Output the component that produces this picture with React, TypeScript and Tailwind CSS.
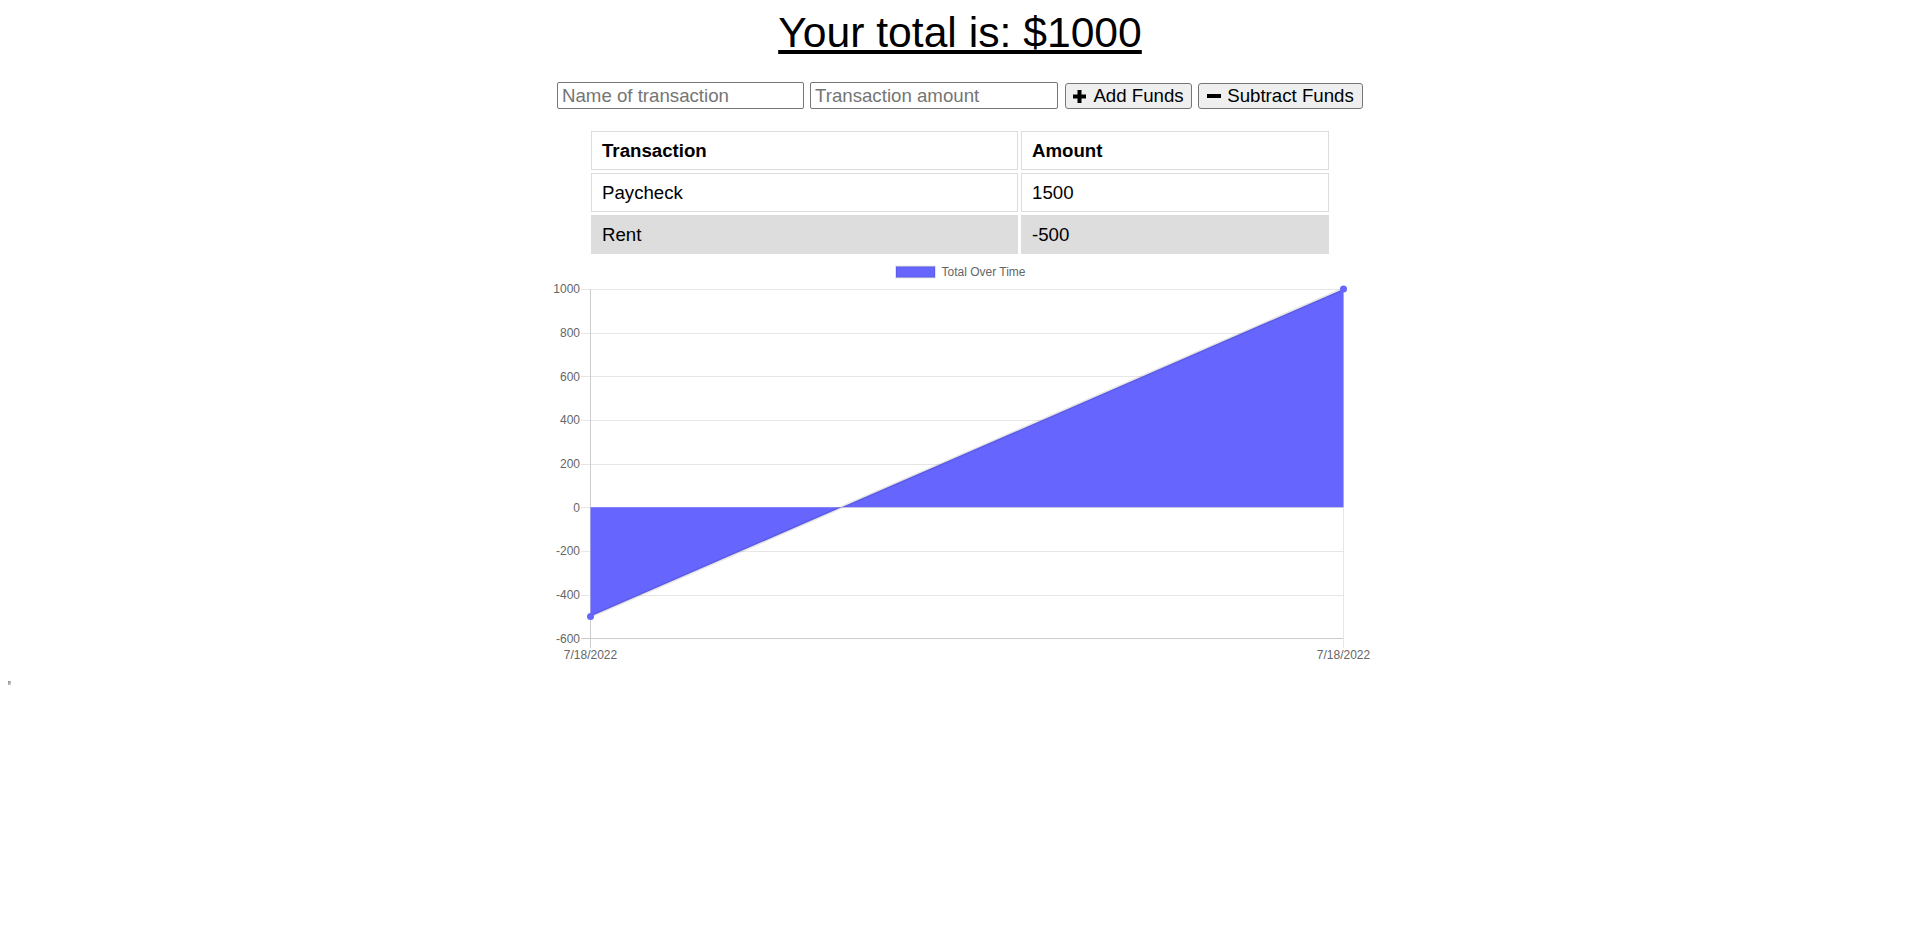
import React from "react";

const ticks = [1000, 800, 600, 400, 200, 0, -200, -400, -600];
const TOP = 31;
const SPAN = 349.3;
const yOf = (v: number) => TOP + ((1000 - v) * SPAN) / 1600;
const X0 = 50.5;
const X1 = 803.5;

function Chart() {
  const yZero = yOf(0);
  const yA = yOf(-500);
  const yB = yOf(1000);
  const xCross = X0 + ((X1 - X0) * 500) / 1500;
  return (
    <svg width={840} height={420} viewBox="0 0 840 420" className="mt-[4px] block">
      {/* legend */}
      <rect x={356} y={8.5} width={39} height={11} fill="#6666ff" stroke="rgba(0,0,0,0.1)" strokeWidth={2} />
      <text x={401.5} y={18.3} fontSize={12} fill="#666" fontFamily="'Liberation Sans', Arial, sans-serif">
        Total Over Time
      </text>

      {/* horizontal grid lines */}
      {ticks.map((t) => {
        const yy = Math.round(yOf(t)) + 0.5;
        const isBottom = t === -600;
        return (
          <g key={t}>
            <line
              x1={41}
              x2={X1}
              y1={yy}
              y2={yy}
              stroke={isBottom ? "#cccccc" : "#e6e6e6"}
              strokeWidth={1}
              shapeRendering="crispEdges"
            />
            <text
              x={40}
              y={yOf(t) + 4.2}
              fontSize={12}
              fill="#666"
              textAnchor="end"
              fontFamily="'Liberation Sans', Arial, sans-serif"
            >
              {t}
            </text>
          </g>
        );
      })}

      {/* vertical lines */}
      <line x1={X0} x2={X0} y1={TOP} y2={390} stroke="#cccccc" strokeWidth={1} shapeRendering="crispEdges" />
      <line x1={X1} x2={X1} y1={TOP} y2={390} stroke="#e6e6e6" strokeWidth={1} shapeRendering="crispEdges" />

      {/* fill */}
      <polygon points={`${X0},${yZero} ${X0},${yA} ${xCross},${yZero}`} fill="#6666ff" />
      <polygon points={`${xCross},${yZero} ${X1},${yB} ${X1},${yZero}`} fill="#6666ff" />
      <line x1={X0} y1={yA} x2={X1} y2={yB} stroke="rgba(0,0,0,0.1)" strokeWidth={3} />
      <circle cx={X0} cy={yA} r={3.5} fill="#6666ff" />
      <circle cx={X1} cy={yB} r={3.5} fill="#6666ff" />

      {/* x labels */}
      <text x={X0} y={401.3} fontSize={12} fill="#666" textAnchor="middle" fontFamily="'Liberation Sans', Arial, sans-serif">
        7/18/2022
      </text>
      <text x={X1} y={401.3} fontSize={12} fill="#666" textAnchor="middle" fontFamily="'Liberation Sans', Arial, sans-serif">
        7/18/2022
      </text>
    </svg>
  );
}

function PlusIcon() {
  return (
    <svg width={13} height={13} viewBox="0 0 13 13" className="mr-[7px] shrink-0">
      <rect x={4.5} y={0} width={4} height={13} fill="#000" />
      <rect x={0} y={4.5} width={13} height={4} fill="#000" />
    </svg>
  );
}

function MinusIcon() {
  return (
    <svg width={14} height={4} viewBox="0 0 14 4" className="mr-[6px] shrink-0">
      <rect x={0} y={0} width={14} height={4} fill="#000" />
    </svg>
  );
}

export default function App() {
  const rows = [
    { name: "Paycheck", amount: "1500", gray: false },
    { name: "Rent", amount: "-500", gray: true },
  ];
  return (
    <div className="min-h-screen bg-white font-['Liberation_Sans',Arial,sans-serif] text-black">
      <div className="flex flex-col items-center">
        <h1 className="mt-[8px] text-[42.67px] leading-[48px] font-normal underline">Your total is: $1000</h1>

        <div className="mt-[26px] flex items-end">
          <input
            type="text"
            placeholder="Name of transaction"
            className="h-[27px] w-[247px] rounded-[2px] border border-[#767676] bg-white pl-[4px] text-[18.67px] text-black placeholder:text-[#757575] outline-none"
          />
          <input
            type="number"
            placeholder="Transaction amount"
            className="ml-[6px] h-[27px] w-[248px] rounded-[2px] border border-[#767676] bg-white pl-[4px] text-[18.67px] text-black placeholder:text-[#757575] outline-none"
          />
          <button className="ml-[7px] flex h-[26px] w-[127px] items-center justify-center rounded-[3px] border border-[#767676] bg-[#efefef] text-[18.67px] text-black">
            <PlusIcon />
            <span>Add Funds</span>
          </button>
          <button className="ml-[6px] flex h-[26px] w-[165px] items-center justify-center rounded-[3px] border border-[#767676] bg-[#efefef] text-[18.67px] text-black">
            <MinusIcon />
            <span>Subtract Funds</span>
          </button>
        </div>

        <div className="mt-[22px] grid w-[738px] grid-cols-[427px_308px] gap-[3px] text-[18.67px]">
          <div className="flex h-[39px] items-center border border-[#dddddd] bg-white px-[10px] font-bold">Transaction</div>
          <div className="flex h-[39px] items-center border border-[#dddddd] bg-white px-[10px] font-bold">Amount</div>
          {rows.map((r) => (
            <React.Fragment key={r.name}>
              <div
                className={
                  r.gray
                    ? "flex h-[39px] items-center border border-[#dddddd] bg-[#dddddd] px-[10px]"
                    : "flex h-[39px] items-center border border-[#dddddd] bg-white px-[10px]"
                }
              >
                {r.name}
              </div>
              <div
                className={
                  r.gray
                    ? "flex h-[39px] items-center border border-[#dddddd] bg-[#dddddd] px-[10px]"
                    : "flex h-[39px] items-center border border-[#dddddd] bg-white px-[10px]"
                }
              >
                {r.amount}
              </div>
            </React.Fragment>
          ))}
        </div>

        <Chart />
      </div>
      <div className="ml-[8px] mt-[3px] h-[4px] w-[3px] bg-gradient-to-br from-[#888888] to-[#dddddd]" />
    </div>
  );
}
